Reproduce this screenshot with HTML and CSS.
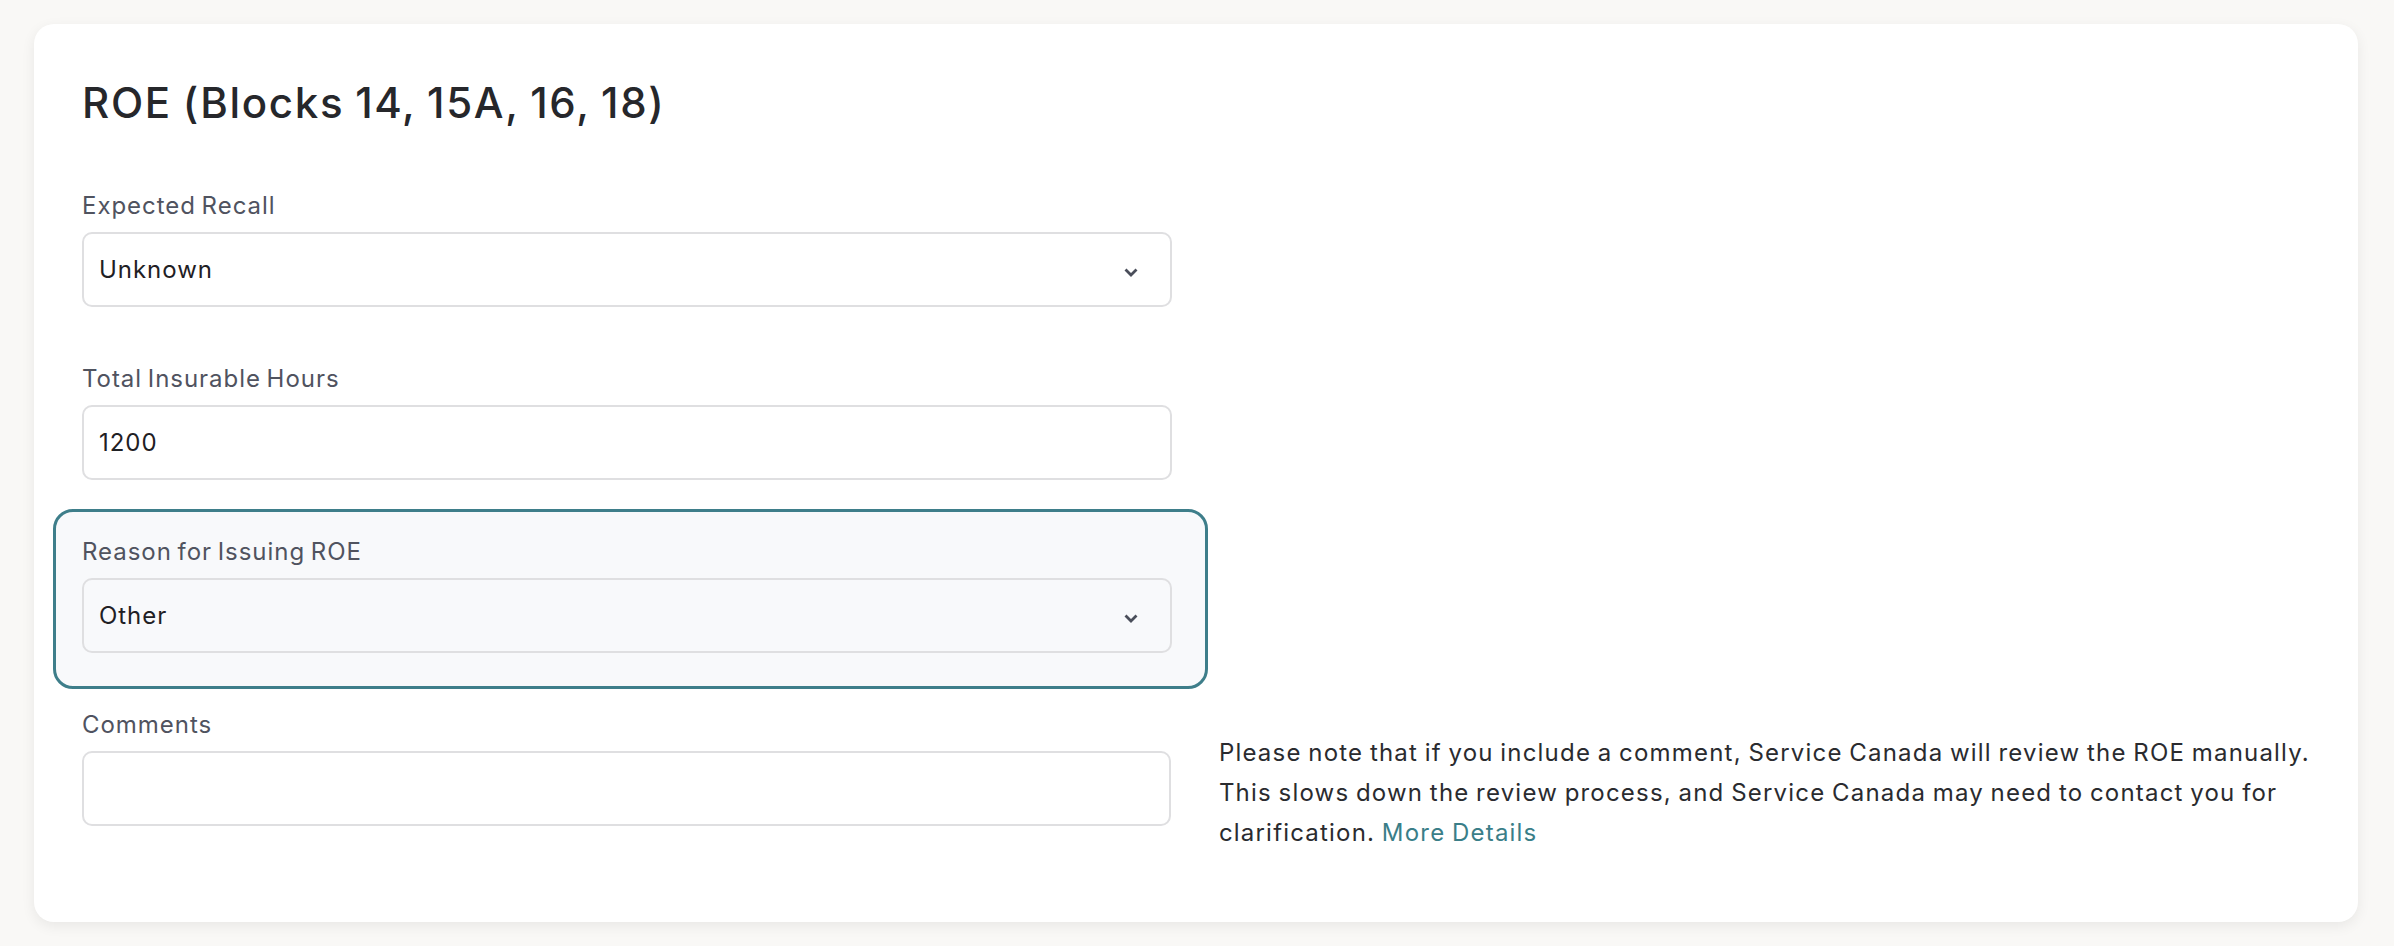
FILE: index.html
```html
<!DOCTYPE html>
<html lang="en">
<head>
    <meta charset="UTF-8">
    <meta name="viewport" content="width=device-width, initial-scale=1.0">
    <title>ROE (Blocks 14, 15A, 16, 18)</title>
    <link rel="stylesheet" href="styles.css">
</head>
<body>
<div class="card">
    <h1 class="section-title">ROE (Blocks 14, 15A, 16, 18)</h1>

    <div class="form-row">
        <div class="field">
            <label class="field-label">Expected Recall</label>
            <div class="select-box">
                <span>Unknown</span>
                <svg class="chevron" width="14" height="9" viewBox="0 0 14 9"><path d="M1.5 1.5l5.5 5.5 5.5-5.5" fill="none" stroke="#4a4e5a" stroke-width="2.8"/></svg>
            </div>
        </div>
        <div></div>
    </div>

    <div class="form-row">
        <div class="field">
            <label class="field-label" for="hours">Total Insurable Hours</label>
            <input class="text-input" id="hours" type="text" value="1200">
        </div>
        <div></div>
    </div>

    <div class="form-row">
        <div class="field field-highlight">
            <label class="field-label">Reason for Issuing ROE</label>
            <div class="select-box">
                <span>Other</span>
                <svg class="chevron" width="14" height="9" viewBox="0 0 14 9"><path d="M1.5 1.5l5.5 5.5 5.5-5.5" fill="none" stroke="#4a4e5a" stroke-width="2.8"/></svg>
            </div>
        </div>
        <div></div>
    </div>

    <div class="form-row">
        <div class="field">
            <label class="field-label" for="comments">Comments</label>
            <input class="text-input" id="comments" type="text" value="">
        </div>
        <p class="field-note">
            Please note that if you include a comment, Service Canada will review the ROE manually.<br>
            This slows down the review process, and Service Canada may need to contact you for<br>
            clarification. <a href="#" class="note-link">More Details</a>
        </p>
    </div>
</div>
</body>
</html>
```

FILE: styles.css
```css
body {
    margin: 0;
    padding: 24px 36px 24px 34px;
    background-color: #f9f8f6;
    font-family: Inter, "Noto Sans", sans-serif;
    letter-spacing: 0.06em;
    word-spacing: -2px;
    color: #26272b;
}
.card {
    background-color: #fff;
    border-radius: 20px;
    padding: 48px 48px 69px;
    box-shadow: 0 4px 14px rgba(0,0,0,0.07);
}
.section-title {
    margin: 0 0 55px;
    font-size: 42px;
    line-height: 61px;
    font-weight: 500;
    letter-spacing: 1.7px;
    color: #26272b;
}
.form-row {
    display: grid;
    grid-template-columns: 1fr 1fr;
    column-gap: 48px;
}
.form-row + .form-row {
    margin-top: 54px;
}
.field {
    display: flex;
    flex-direction: column;
}
.field-highlight {
    margin: -25px -36px -36px -29px;
    padding: 22px 33px 33px 26px;
    border: 3px solid #3e7e8a;
    border-radius: 20px;
    background-color: #f8f9fb;
}
.field-label {
    font-size: 24px;
    line-height: 36px;
    margin-bottom: 8px;
    color: #50535f;
}
.select-box,
.text-input {
    box-sizing: border-box;
    height: 75px;
    width: 100%;
    border: 2px solid #dfdfe1;
    border-radius: 10px;
    padding: 0 32px 0 15px;
    font-family: inherit;
    font-size: 24px;
    letter-spacing: inherit;
    color: #1f2024;
    background-color: transparent;
}
.select-box {
    display: flex;
    align-items: center;
    justify-content: space-between;
}
.chevron {
    margin-top: 5px;
}
.text-input {
    outline: none;
}
.field-note {
    margin: 26px 0 0;
    font-size: 24px;
    line-height: 40px;
    letter-spacing: 0.05em;
    word-spacing: -1.3px;
    white-space: nowrap;
    color: #2a2b2f;
}
.note-link {
    color: #3a7e88;
    text-decoration: none;
}
```
